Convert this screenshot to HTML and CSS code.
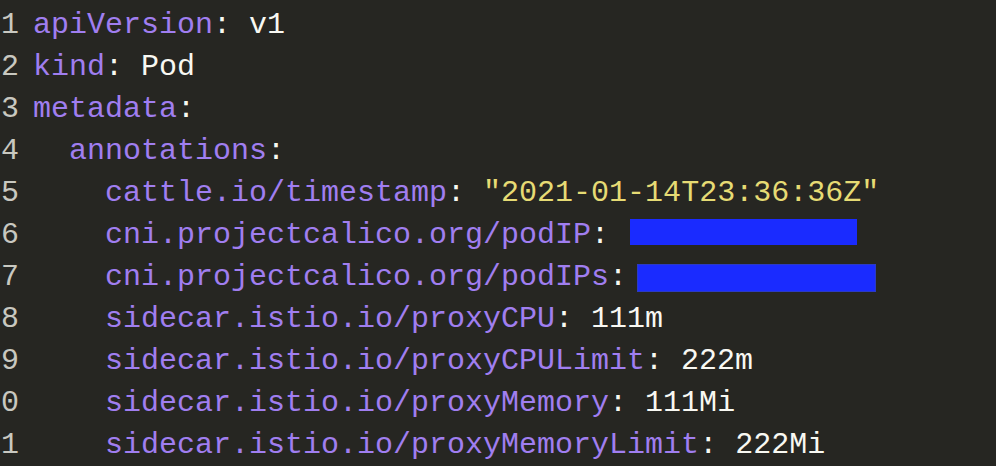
FILE: index.html
```html
<!DOCTYPE html>
<html>
<head>
<meta charset="utf-8">
<link rel="stylesheet" href="styles.css">
</head>
<body>
<div class="editor">
  <div class="line"><span class="ln">1</span><span class="code"><span class="k">apiVersion</span><span class="p">: v1</span></span></div>
  <div class="line"><span class="ln">2</span><span class="code"><span class="k">kind</span><span class="p">: Pod</span></span></div>
  <div class="line"><span class="ln">3</span><span class="code"><span class="k">metadata</span><span class="p">:</span></span></div>
  <div class="line"><span class="ln">4</span><span class="code">  <span class="k">annotations</span><span class="p">:</span></span></div>
  <div class="line"><span class="ln">5</span><span class="code">    <span class="k">cattle.io/timestamp</span><span class="p">: </span><span class="s">"2021-01-14T23:36:36Z"</span></span></div>
  <div class="line"><span class="ln">6</span><span class="code">    <span class="k">cni.projectcalico.org/podIP</span><span class="p">: </span><span class="redact r1"></span></span></div>
  <div class="line"><span class="ln">7</span><span class="code">    <span class="k">cni.projectcalico.org/podIPs</span><span class="p">: </span><span class="redact r2"></span></span></div>
  <div class="line"><span class="ln">8</span><span class="code">    <span class="k">sidecar.istio.io/proxyCPU</span><span class="p">: 111m</span></span></div>
  <div class="line"><span class="ln">9</span><span class="code">    <span class="k">sidecar.istio.io/proxyCPULimit</span><span class="p">: 222m</span></span></div>
  <div class="line"><span class="ln">10</span><span class="code">    <span class="k">sidecar.istio.io/proxyMemory</span><span class="p">: 111Mi</span></span></div>
  <div class="line"><span class="ln">11</span><span class="code">    <span class="k">sidecar.istio.io/proxyMemoryLimit</span><span class="p">: 222Mi</span></span></div>
</div>
</body>
</html>
```

FILE: styles.css
```css
html, body {
  margin: 0;
  padding: 0;
  background: #262622;
  height: 100%;
  overflow: hidden;
}
.editor {
  padding: 4px 0 0 1px;
  font-family: "Liberation Mono", "Courier New", monospace;
  font-size: 30px;
  line-height: 42px;
  color: #f8f8f2;
}
.line {
  display: flex;
  gap: 14px;
  height: 42px;
  white-space: pre;
}
.ln {
  width: 18px;
  flex: none;
  overflow: hidden;
  direction: rtl;
  color: #c8c8c0;
}
.code {
  flex: 1;
  white-space: pre;
}
.k { color: #a07ef0; }
.p { color: #f8f8f2; }
.s { color: #e6db74; }
.redact {
  display: inline-block;
  vertical-align: top;
  background: #1a2bff;
}
.r1 {
  width: 227px;
  height: 26px;
  margin: 5px 0 0 3px;
}
.r2 {
  width: 237px;
  height: 26px;
  margin: 8px 0 0 -8px;
  border: 1px solid #2b3bc4;
}
```
